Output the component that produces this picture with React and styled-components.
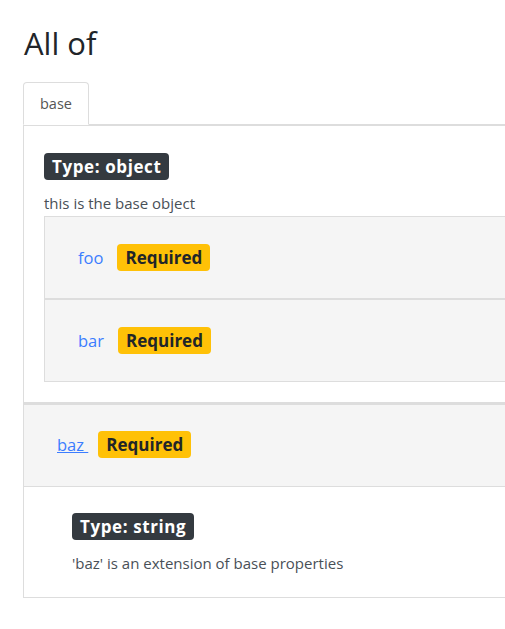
import React from 'react';
import styled, { createGlobalStyle } from 'styled-components';

const GlobalStyle = createGlobalStyle`
  html, body {
    margin: 0;
    padding: 0;
    background: #fff;
    overflow: hidden;
  }
  body {
    font-family: "Open Sans", "Noto Sans", sans-serif;
    color: #212529;
  }
`;

const Page = styled.div`
  width: 640px;
  padding: 23px 0 0 23px;
`;

const Title = styled.h1`
  margin: 0 0 19px 1px;
  font-size: 31px;
  font-weight: 400;
  line-height: 40px;
  color: #212529;
`;

const TabList = styled.div`
  display: flex;
`;

const Tab = styled.button`
  height: 43px;
  padding: 0 16px;
  margin-bottom: -1px;
  border: 1px solid #ddd;
  border-bottom-color: #fff;
  border-radius: 4px 4px 0 0;
  background: #fff;
  font-family: inherit;
  font-size: 14.5px;
  color: #555;
  position: relative;
  z-index: 1;
`;

const Panel = styled.div`
  border: 1px solid #ddd;
  border-top-width: 2px;
  padding: 27px 0 20px 20px;
`;

const Badge = styled.span`
  display: inline-block;
  height: 27px;
  line-height: 27px;
  padding: 0 8px;
  border-radius: 4px;
  font-size: 17px;
  font-weight: 700;
  letter-spacing: ${p => (p.$tone === 'warn' ? '0' : '0.6px')};
  background: ${p => (p.$tone === 'warn' ? '#ffc107' : '#343a40')};
  color: ${p => (p.$tone === 'warn' ? '#212529' : '#fff')};
`;

const Description = styled.p`
  margin: 11px 0 0;
  font-size: 15px;
  line-height: 24px;
  color: #495057;
`;

const PropertyList = styled.div`
  margin-top: 1px;
  background: #f5f5f5;
  border: 1px solid #ddd;
`;

const PropertyRow = styled.div`
  display: flex;
  align-items: center;
  gap: 14px;
  height: 81px;
  padding-left: 33px;
  & + & {
    border-top: 2px solid #ddd;
  }
`;

const PropName = styled.a`
  font-size: 16.5px;
  color: #3c7dff;
  white-space: pre;
  text-decoration: ${p => (p.$underline ? 'underline' : 'none')};
`;

const Section = styled.div`
  border: 1px solid #ddd;
  border-top-width: 2px;
  border-bottom: none;
`;

const SectionHeader = styled(PropertyRow)`
  background: #f5f5f5;
  height: 82px;
  border-bottom: 1px solid #ddd;
  gap: 10px;
  padding-bottom: 3px;
  box-sizing: border-box;
`;

const SectionBody = styled.div`
  padding: 26px 0 22px 48px;
  border-bottom: 1px solid #ddd;
`;

export default function App() {
  return (
    <Page>
      <GlobalStyle />
      <Title>All of</Title>
      <TabList>
        <Tab>base</Tab>
      </TabList>
      <Panel>
        <Badge>Type: object</Badge>
        <Description>this is the base object</Description>
        <PropertyList>
          <PropertyRow>
            <PropName>foo</PropName>
            <Badge $tone="warn">Required</Badge>
          </PropertyRow>
          <PropertyRow>
            <PropName>bar</PropName>
            <Badge $tone="warn">Required</Badge>
          </PropertyRow>
        </PropertyList>
      </Panel>
      <Section>
        <SectionHeader>
          <PropName href="#" $underline>baz </PropName>
          <Badge $tone="warn">Required</Badge>
        </SectionHeader>
        <SectionBody>
          <Badge>Type: string</Badge>
          <Description>'baz' is an extension of base properties</Description>
        </SectionBody>
      </Section>
    </Page>
  );
}
